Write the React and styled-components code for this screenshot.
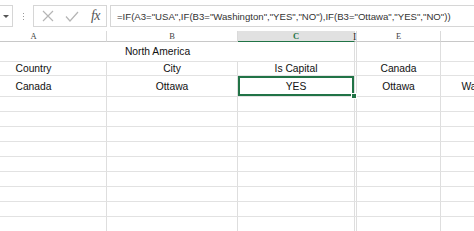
import styled, { createGlobalStyle } from 'styled-components';

const GlobalStyle = createGlobalStyle`
  html, body {
    margin: 0;
    padding: 0;
    background: #ffffff;
    overflow: hidden;
  }
  body {
    font-family: "Liberation Sans", Arial, sans-serif;
  }
`;

const columns = [
  { key: 'A', width: 146 },
  { key: 'B', width: 131 },
  { key: 'C', width: 117 },
  { key: 'D', width: 2, hidden: true },
  { key: 'E', width: 84 },
  { key: 'F', width: 96 },
];

const dataRows = [
  { height: 14, cells: ['Country', 'City', 'Is Capital', '', 'Canada', ''] },
  { height: 21, cells: ['Canada', 'Ottawa', 'YES', '', 'Ottawa', 'Washington'] },
];

const emptyRows = 10;
const formula = '=IF(A3="USA",IF(B3="Washington","YES","NO"),IF(B3="Ottawa","YES","NO"))';

const Page = styled.div`
  width: 474px;
  height: 231px;
  overflow: hidden;
  background: #fff;
`;

const Toolbar = styled.div`
  display: flex;
  align-items: center;
  height: 31px;
  padding-top: 1px;
  box-sizing: border-box;
`;

const NameBox = styled.div`
  width: 13px;
  height: 22px;
  box-sizing: border-box;
  border: 1px solid #d6d6d6;
  border-left: none;
  display: flex;
  align-items: center;
  justify-content: center;
`;

const Caret = styled.span`
  width: 0;
  height: 0;
  border-left: 3px solid transparent;
  border-right: 3px solid transparent;
  border-top: 3px solid #555;
`;

const Grip = styled.div`
  width: 20px;
  display: flex;
  flex-direction: column;
  align-items: center;
  gap: 2px;

  span {
    width: 1px;
    height: 1px;
    background: #999;
  }
`;

const ButtonBox = styled.div`
  display: flex;
  align-items: center;
  justify-content: space-between;
  width: 74px;
  height: 22px;
  box-sizing: border-box;
  border: 1px solid #d6d6d6;
  padding: 0 6px 0 8px;
`;

const Fx = styled.span`
  font-family: "Liberation Serif", "Times New Roman", serif;
  font-style: italic;
  font-size: 14px;
  color: #555;
  letter-spacing: -0.5px;
`;

const FormulaInput = styled.div`
  flex: 1;
  margin-left: 3px;
  height: 22px;
  box-sizing: border-box;
  border: 1px solid #d6d6d6;
  border-right: none;
  padding-left: 6px;
  display: flex;
  align-items: center;
  font-size: 9.6px;
  color: #333;
  white-space: nowrap;
  overflow: hidden;
`;

const Viewport = styled.div`
  overflow: hidden;
`;

// column A is scrolled partly out of view on the left
const Sheet = styled.div`
  display: flex;
  flex-direction: column;
  width: max-content;
  transform: translateX(-39px);
`;

const Row = styled.div`
  display: flex;
  height: ${({ $h }) => $h}px;
`;

const HeaderCell = styled.div`
  position: relative;
  flex: none;
  width: ${({ $w }) => $w}px;
  height: 11px;
  box-sizing: border-box;
  border-right: 1px solid #dadada;
  border-bottom: 1px solid ${({ $active }) => ($active ? '#217346' : '#c8c8c8')};
  background: ${({ $active }) => ($active ? '#e1e1e1' : '#fff')};
  font-family: "Liberation Serif", "Times New Roman", serif;
  font-size: 8.5px;
  line-height: 10px;
  text-align: center;
  color: ${({ $active }) => ($active ? '#217346' : '#444')};
  font-weight: ${({ $active }) => ($active ? 700 : 400)};
`;

const HiddenMark = styled.span`
  position: absolute;
  left: -2px;
  top: 0;
  font-size: 10px;
  line-height: 11px;
  color: #333;
  font-weight: 400;
`;

const Cell = styled.div`
  position: relative;
  flex: none;
  width: ${({ $w }) => $w}px;
  height: 100%;
  box-sizing: border-box;
  border-right: 1px solid #dedede;
  border-bottom: 1px solid #e2e2e2;
  display: flex;
  align-items: center;
  justify-content: center;
  font-size: 10.3px;
  color: #111;
  white-space: nowrap;
  box-shadow: ${({ $selected }) => ($selected ? 'inset 0 0 0 2px #217346' : 'none')};
`;

const FillHandle = styled.span`
  position: absolute;
  right: -3px;
  bottom: -3px;
  width: 4px;
  height: 4px;
  background: #217346;
  border: 1px solid #fff;
  z-index: 2;
`;

const CrossIcon = () => (
  <svg width="12" height="12" viewBox="0 0 12 12">
    <path d="M1 1 L11 11 M11 1 L1 11" stroke="#b5b5b5" strokeWidth="1.2" fill="none" />
  </svg>
);

const CheckIcon = () => (
  <svg width="14" height="11" viewBox="0 0 14 11">
    <path d="M1 5.5 L5 10 L13 1" stroke="#b5b5b5" strokeWidth="1.2" fill="none" />
  </svg>
);

const mergedWidth = columns.slice(0, 3).reduce((sum, c) => sum + c.width, 0);

export default function App() {
  return (
    <Page>
      <GlobalStyle />
      <Toolbar>
        <NameBox>
          <Caret />
        </NameBox>
        <Grip>
          <span />
          <span />
          <span />
        </Grip>
        <ButtonBox>
          <CrossIcon />
          <CheckIcon />
          <Fx>fx</Fx>
        </ButtonBox>
        <FormulaInput>{formula}</FormulaInput>
      </Toolbar>

      <Viewport>
        <Sheet>
          <Row $h={11}>
            {columns.map((c) => (
              <HeaderCell key={c.key} $w={c.width} $active={c.key === 'C'}>
                {c.hidden ? <HiddenMark>I</HiddenMark> : c.key}
              </HeaderCell>
            ))}
          </Row>

          <Row $h={20}>
            <Cell $w={mergedWidth}>North America</Cell>
            {columns.slice(3).map((c) => (
              <Cell key={c.key} $w={c.width} />
            ))}
          </Row>

          {dataRows.map((row, r) => (
            <Row key={r} $h={row.height}>
              {columns.map((c, i) => {
                const selected = r === 1 && c.key === 'C';
                return (
                  <Cell key={c.key} $w={c.width} $selected={selected}>
                    {row.cells[i]}
                    {selected && <FillHandle />}
                  </Cell>
                );
              })}
            </Row>
          ))}

          {Array.from({ length: emptyRows }).map((_, r) => (
            <Row key={`e${r}`} $h={15}>
              {columns.map((c) => (
                <Cell key={c.key} $w={c.width} />
              ))}
            </Row>
          ))}
        </Sheet>
      </Viewport>
    </Page>
  );
}
